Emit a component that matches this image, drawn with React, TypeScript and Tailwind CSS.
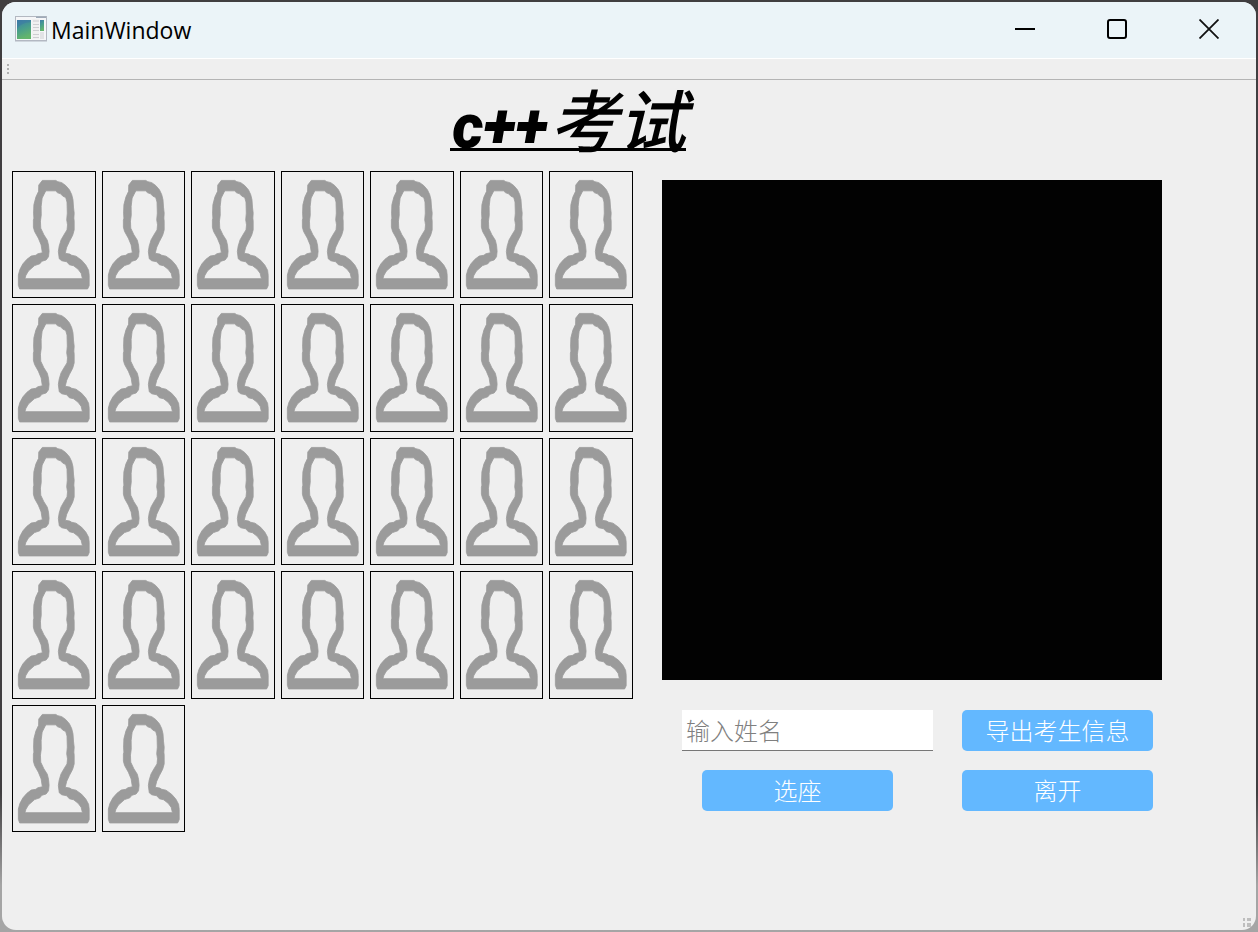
import { useState } from 'react';

const SEAT_COUNT = 30;

function AppIcon() {
  return (
    <svg viewBox="0 0 32 26" className="h-[26px] w-8 shrink-0" aria-hidden="true">
      <defs>
        <linearGradient id="pane" x1="0" y1="0" x2="0.3" y2="1">
          <stop offset="0" stopColor="#3f7ba8" />
          <stop offset="0.5" stopColor="#479d8e" />
          <stop offset="1" stopColor="#63b56c" />
        </linearGradient>
      </defs>
      <rect x="0.5" y="0.5" width="31" height="24" fill="#f5f6f8" stroke="#b3b8c1" />
      <rect x="0" y="24" width="32" height="1.5" fill="#b3b8c2" />
      <rect x="21" y="0.5" width="10" height="1.5" fill="#9eaab8" />
      <rect x="2" y="4" width="14" height="19" fill="url(#pane)" />
      <path d="M2 13Q5 7 16 6V4H2Z" fill="#3a78a5" opacity="0.5" />
      <rect x="17" y="3" width="7" height="20" fill="#f1f1f1" />
      <path d="M18 5h6M18 8.5h6M18 11.5h6M18 14.5h6M18 18.5h6M18 21.5h6" stroke="#cdced1" strokeWidth="1.2" />
      <rect x="25" y="4" width="4" height="11" fill="url(#pane)" />
      <rect x="25" y="16" width="4" height="7" fill="#e2e3e5" />
    </svg>
  );
}

function Person() {
  return (
    <svg viewBox="1 1 82 125" preserveAspectRatio="none" className="h-full w-full" aria-hidden="true">
      <path
        fill="#9b9b9b"
        stroke="#9b9b9b"
        strokeWidth="0.8"
        strokeLinejoin="round"
        fillRule="evenodd"
        d="M30.5 9.4L44 9.4L46 10.6L50 11.6L54 14.5L57.7 18.7L60 23.5L61.3 28.7L61.8 36L62.5 42L62.2 47L62.5 50V58.7L61 64L57.7 70.3L55 76L53.5 82L58 82.8L60 84L64.3 84.9L70 89L74.3 93.9L77 99L77.6 104V114.3L76 117.6H7.7L6.4 114V103.7L8 98L11 92.5L15 88L19.3 84.8L24 84L26 82.5L30.5 81.5L29.3 73.7L26.5 67L22.7 60.3L21.5 56V49L22 47L21.7 42L22 33.7L24 26L26.7 20.3L26.9 14L28.5 12Z
        M34 19.8L30.3 27L29.3 35.3L29.4 44L28.6 50L28.9 57L32 63.5L35.5 69L36.7 74L37.3 80L36.7 85.5L34.3 88.7L30 90L28 92.5L22.7 94.3L16.5 99.7L14 104L13 107.3H70.8L69.5 102L66.5 98L62 94.5L57.7 93.5L55 90.5L50 89.5L47.5 87.5L46.6 80.3L47.4 75L49.3 68.7L52 64L55.3 58.7L55.8 53.7L55 48.7L55.6 42L55.3 31L54 26.5L51 25L49 22.8L46 21.8L43.7 19.8Z"
      />
    </svg>
  );
}

const windowButton = 'flex h-[54px] w-[92px] items-center justify-center hover:bg-black/5';
const actionButton =
  'h-[41px] w-[191px] rounded-[5px] bg-[#63b8ff] pb-0.5 text-2xl font-light text-white hover:bg-[#55adf7]';

export default function App() {
  const [name, setName] = useState('');

  return (
    <div className="flex min-h-screen flex-col bg-linear-to-b from-[#403e40] from-85% to-[#a5a5a5] to-95% p-0.5 font-['Noto_Sans_CJK_SC',sans-serif] text-black">
      <div className="flex grow flex-col overflow-hidden rounded-[14px] bg-[#efefef]">
        <header className="flex h-14 items-start justify-between bg-[#ebf4f8]">
          <div className="flex h-14 items-center gap-1 pb-0.5 pl-[13px]">
            <AppIcon />
            <span className="pt-0.5 font-['Open_Sans','Noto_Sans',sans-serif] text-[23px]">MainWindow</span>
          </div>
          <div className="flex pr-px">
            <button type="button" aria-label="Minimize" className={windowButton}>
              <svg viewBox="0 0 20 20" className="size-5">
                <path d="M0 10h20" stroke="#000" strokeWidth="2" />
              </svg>
            </button>
            <button type="button" aria-label="Maximize" className={windowButton}>
              <svg viewBox="0 0 20 20" className="size-5">
                <rect x="1" y="1" width="18" height="18" rx="2" fill="none" stroke="#000" strokeWidth="2" />
              </svg>
            </button>
            <button type="button" aria-label="Close" className={windowButton}>
              <svg viewBox="0 0 20 20" className="size-5">
                <path d="M0.5 0.5L19.5 19.5M19.5 0.5L0.5 19.5" stroke="#111" strokeWidth="1.8" />
              </svg>
            </button>
          </div>
        </header>

        <div className="flex h-[22px] items-center border-t border-b border-t-white border-b-[#b4b4b4] pl-1">
          <svg viewBox="0 0 4 12" className="h-3 w-1" aria-hidden="true">
            <path d="M1 1h2v2h-2zM1 5h2v2h-2zM1 9h2v2h-2z" fill="#b0b0b0" />
          </svg>
        </div>

        <main className="flex grow flex-col">
          <div className="flex h-[91px] justify-center pr-[122px]">
            <h1 className="flex h-[71px] items-end gap-0.5 border-b-3 border-black pl-0.5 whitespace-nowrap italic">
              <span className="font-['Roboto',sans-serif] text-[62px] leading-[42px] font-black">c++</span>
              <span className="text-[68px] leading-[60px] font-medium">考试</span>
            </h1>
          </div>

          <div className="flex items-start pl-2.5">
            <ul className="grid h-[661px] flex-1 grid-cols-7 grid-rows-5 gap-1.5">
              {Array.from({ length: SEAT_COUNT }, (_, i) => (
                <li key={i} className="min-h-0 border border-black">
                  <Person />
                </li>
              ))}
            </ul>

            <section className="w-[623px] pt-[9px] pl-[29px]">
              <div className="size-[500px] bg-[#020202]" />
              <form
                className="flex gap-[29px] pt-[30px] pl-5"
                onSubmit={(event) => event.preventDefault()}
              >
                <div className="flex w-[251px] flex-col gap-[19px]">
                  <input
                    type="text"
                    aria-label="输入姓名"
                    placeholder="输入姓名"
                    value={name}
                    onChange={(event) => setName(event.target.value)}
                    className="h-[41px] w-full border-b border-[#777] bg-white px-1 pb-0.5 text-2xl font-light outline-none placeholder:text-[#7f7f7f]"
                  />
                  <button type="submit" className={`${actionButton} ml-5`}>选座</button>
                </div>
                <div className="flex flex-col gap-[19px]">
                  <button type="button" className={actionButton}>导出考生信息</button>
                  <button type="button" className={actionButton}>离开</button>
                </div>
              </form>
            </section>
          </div>

          <div className="mt-auto flex justify-end pr-1 pb-[3px]">
            <svg viewBox="0 0 10 10" className="size-2.5" aria-hidden="true">
              <path d="M1 1h2v3h-2zM5 1h4v3h-4zM1 6h2v4h-2zM5 6h4v4h-4z" fill="#bebebe" />
            </svg>
          </div>
        </main>
      </div>
    </div>
  );
}
